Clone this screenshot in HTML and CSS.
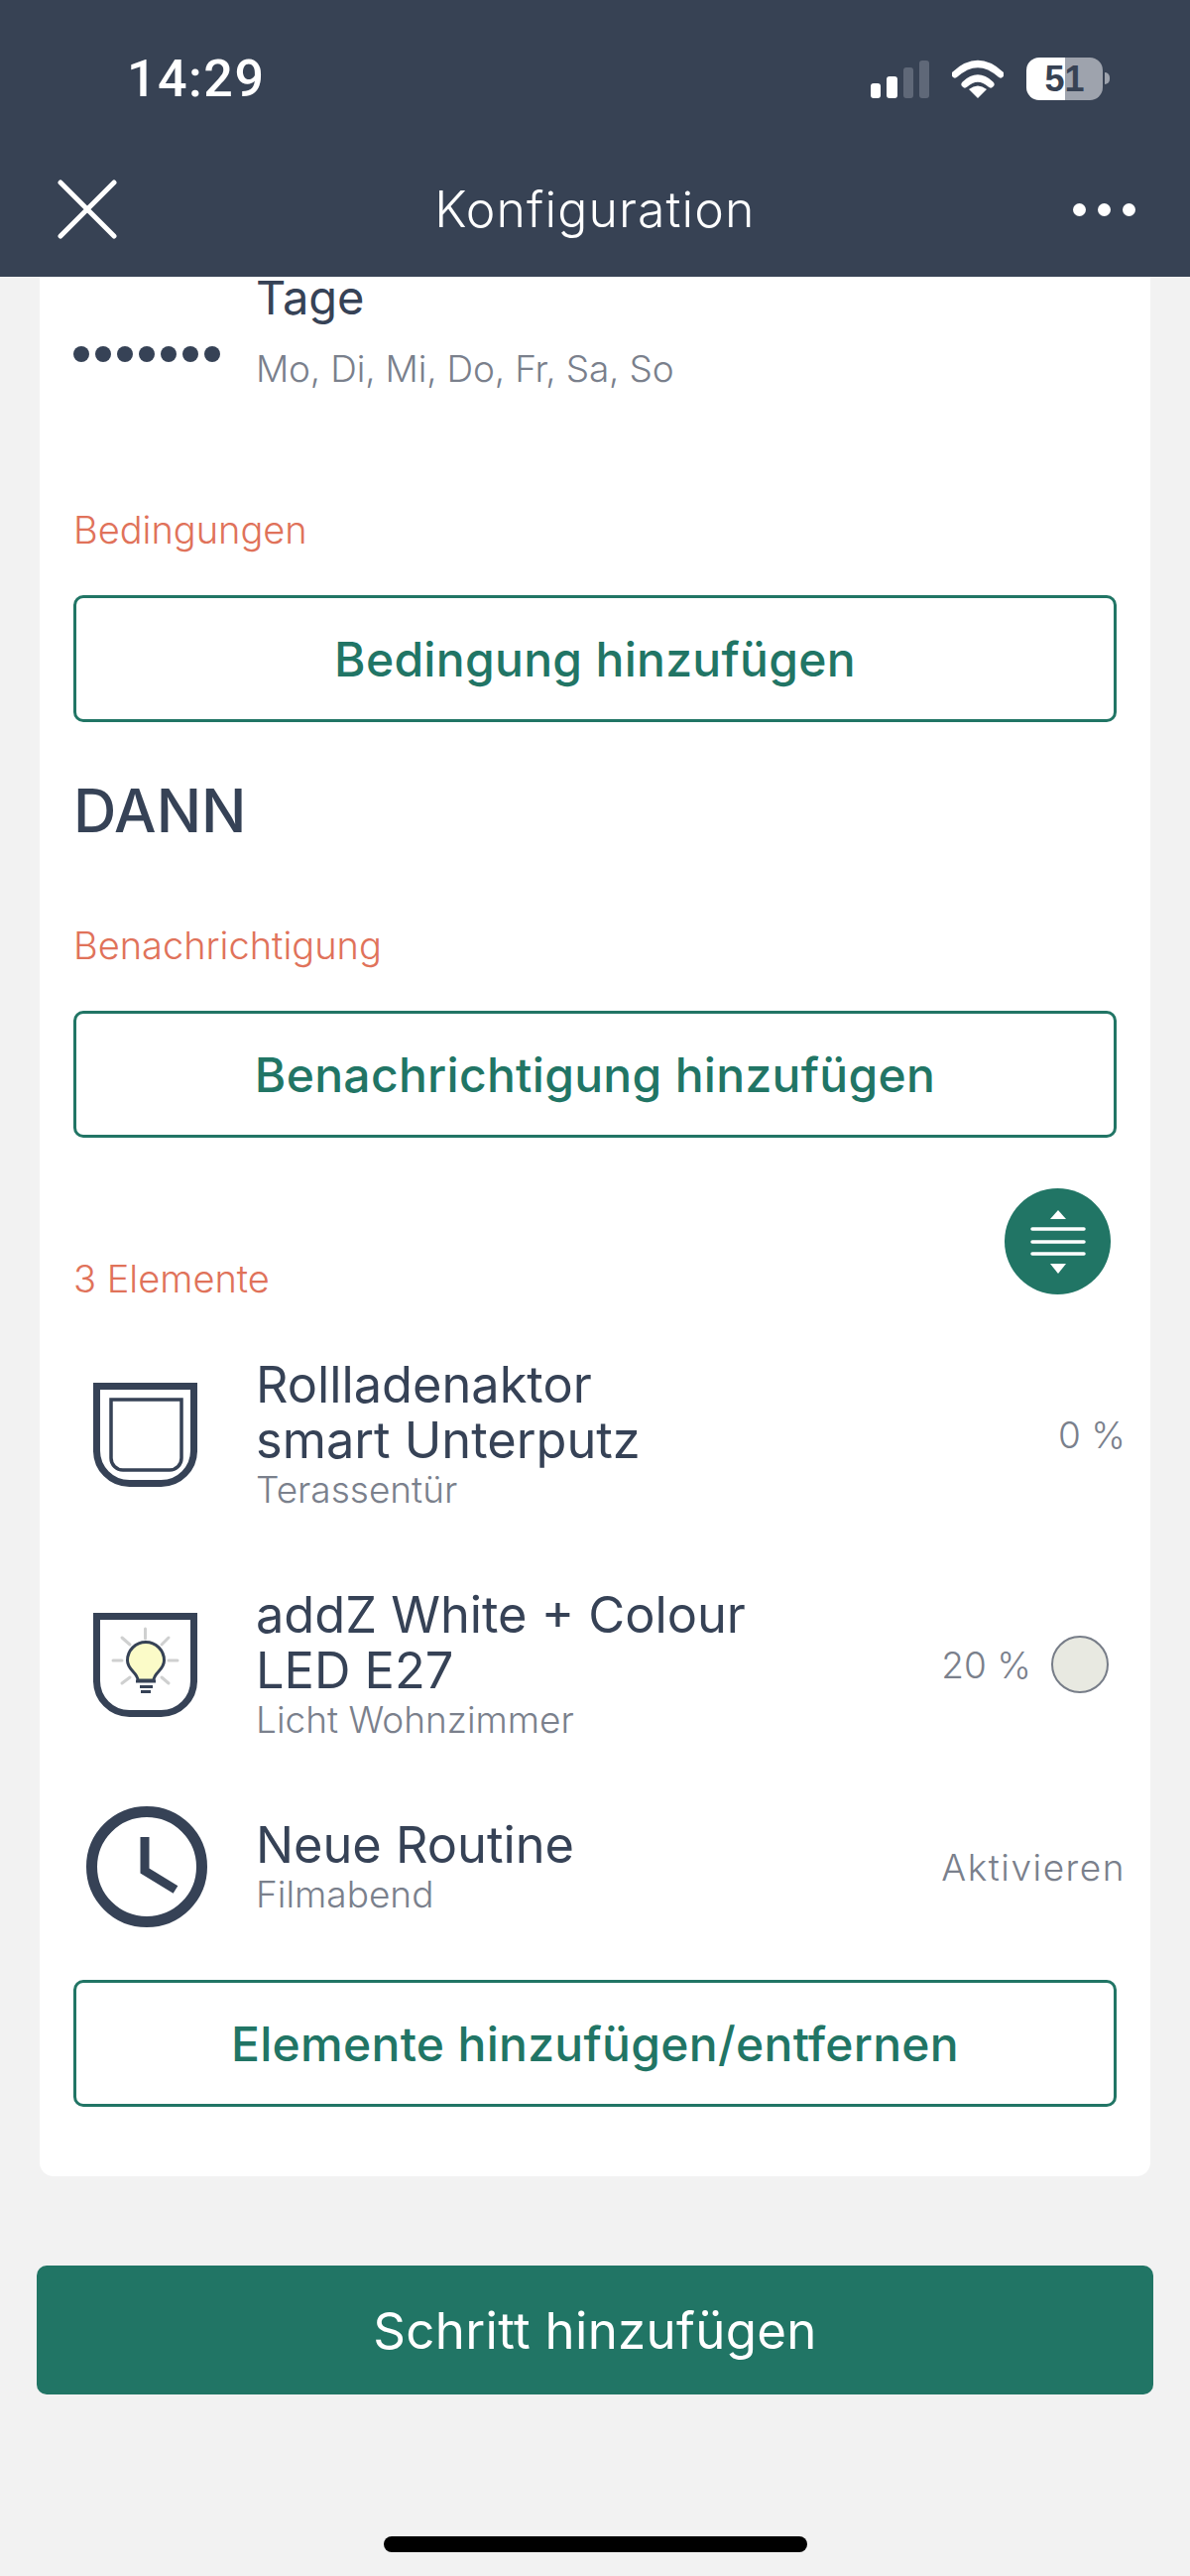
FILE: index.html
```html
<!doctype html>
<html lang="de">
  <head>
    <title>Konfiguration</title>
    <meta name="viewport" content="width=device-width, initial-scale=1.0" />
    <link rel="stylesheet" href="styles.css">
  </head>
  <body>
    <header class="topbar">
      <div class="status">
        <span class="time">14:29</span>
        <div class="status-icons">
          <svg class="signal" viewBox="0 0 59 38">
            <rect x="0" y="23" width="10" height="15" rx="3" fill="#fff" />
            <rect x="16" y="16" width="11" height="22" rx="3" fill="#fff" />
            <rect x="33" y="7" width="10" height="31" rx="3" fill="#5f6878" />
            <rect x="49" y="0" width="10" height="38" rx="3" fill="#5f6878" />
          </svg>
          <svg class="wifi" viewBox="0 0 52 39">
            <path d="M3 15Q26 -6 49 15" fill="none" stroke="#fff" stroke-width="7" stroke-linecap="round" />
            <path d="M13 25Q26 13 39 25" fill="none" stroke="#fff" stroke-width="7" stroke-linecap="round" />
            <path d="M26 39L17 30Q26 23 35 30Z" fill="#fff" />
          </svg>
          <div class="battery"><span>51</span></div>
          <span class="battery-nub"></span>
        </div>
      </div>
      <nav class="navbar">
        <svg class="close" viewBox="0 0 60 60">
          <path d="M3 3L57 57M57 3L3 57" fill="none" stroke="#fff" stroke-width="5" stroke-linecap="round" />
        </svg>
        <h1>Konfiguration</h1>
        <div class="more"><i></i><i></i><i></i></div>
      </nav>
    </header>

    <main class="content">
      <section class="card">
        <div class="days">
          <div class="day-dots"><i></i><i></i><i></i><i></i><i></i><i></i><i></i></div>
          <div>
            <div class="title days-title">Tage</div>
            <div class="sub days-sub">Mo, Di, Mi, Do, Fr, Sa, So</div>
          </div>
        </div>

        <div class="label label-first">Bedingungen</div>
        <button class="outline">Bedingung hinzufügen</button>

        <h2>DANN</h2>

        <div class="label label-notify">Benachrichtigung</div>
        <button class="outline">Benachrichtigung hinzufügen</button>

        <div class="elements-head">
          <div class="label">3 Elemente</div>
          <svg class="sort" viewBox="0 0 107 107">
            <circle cx="53.5" cy="53.5" r="53.5" fill="#217565" />
            <path d="M28 41H80M28 54H80M28 66H80" stroke="#fff" stroke-width="3.5" stroke-linecap="round" />
            <path d="M54 22L62 31H46Z" fill="#fff" />
            <path d="M46 76H62L54 86Z" fill="#fff" />
          </svg>
        </div>

        <div class="rows">
          <div class="row">
            <div class="row-icon">
              <svg class="device" viewBox="0 0 105 105">
                <path d="M3.500 3.500H101.500V68A33 33 0 0 1 68.500 101.500H36.500A33 33 0 0 1 3.500 68Z" fill="none" stroke="#364256" stroke-width="7" />
                <path d="M18 17H89V76A12 12 0 0 1 77 88H30A12 12 0 0 1 18 76Z" fill="none" stroke="#364256" stroke-width="3.500" />
              </svg>
            </div>
            <div class="row-text">
              <div class="title">Rollladenaktor<br>smart Unterputz</div>
              <div class="sub">Terassentür</div>
            </div>
            <div class="value">0 %</div>
          </div>

          <div class="row">
            <div class="row-icon">
              <svg class="device" viewBox="0 0 105 105">
                <path d="M3.500 3.500H101.500V68A33 33 0 0 1 68.500 101.500H36.500A33 33 0 0 1 3.500 68Z" fill="none" stroke="#364256" stroke-width="7" />
                <path d="M52.500 16V26M20 48H29M76 48H85M29 25L37 32M76 25L69 32M29 71L37 65M76 71L69 65" stroke="#cfd0d0" stroke-width="3" stroke-linecap="round" />
                <path d="M45 68C45 60 34.500 58 34.500 48A18.500 18.500 0 0 1 71.500 48C71.500 58 61 60 61 68Z" fill="#fbfbc8" stroke="#364256" stroke-width="3" />
                <path d="M43 69H63M47 74.500H60M48 79.500H58" stroke="#364256" stroke-width="3" />
              </svg>
            </div>
            <div class="row-text">
              <div class="title">addZ White + Colour<br>LED E27</div>
              <div class="sub">Licht Wohnzimmer</div>
            </div>
            <div class="value">20 %<span class="swatch"></span></div>
          </div>

          <div class="row">
            <div class="row-icon">
              <svg class="clock" viewBox="0 0 122 122">
                <circle cx="61" cy="61" r="55.500" fill="none" stroke="#364256" stroke-width="11" />
                <path d="M59 31V65L90 84" fill="none" stroke="#364256" stroke-width="9" />
              </svg>
            </div>
            <div class="row-text">
              <div class="title">Neue Routine</div>
              <div class="sub">Filmabend</div>
            </div>
            <div class="value value-action">Aktivieren</div>
          </div>
        </div>

        <button class="outline outline-last">Elemente hinzufügen/entfernen</button>
      </section>

      <button class="primary">Schritt hinzufügen</button>
    </main>

    <div class="home-bar"></div>
  </body>
</html>
```

FILE: styles.css
```css
* {
  box-sizing: border-box;
}
html,
body {
  margin: 0;
  height: 2597px;
}
body {
  display: flex;
  flex-direction: column;
  overflow: hidden;
  background: #f2f2f2;
  color: #364256;
  font-family: Inter, "Liberation Sans", sans-serif;
}
svg {
  display: block;
}

/* top bar */
.topbar {
  position: relative;
  z-index: 1;
  flex: none;
  height: 279px;
  background: #374254;
  color: white;
}
.status {
  display: flex;
  justify-content: space-between;
  height: 158px;
  padding: 52px 81px 0 128px;
}
.time {
  font-family: Roboto, sans-serif;
  font-size: 52px;
  font-weight: 500;
  letter-spacing: 1.5px;
  line-height: 56px;
}
.status-icons {
  display: flex;
  align-items: flex-start;
  padding-top: 6px;
}
.signal {
  width: 59px;
  height: 38px;
  margin-top: 3px;
  margin-right: 23px;
}
.wifi {
  width: 52px;
  height: 39px;
  margin-top: 2px;
  margin-right: 23px;
}
.battery {
  width: 77px;
  height: 43px;
  border-radius: 13px;
  background: linear-gradient(90deg, #fff 0 39px, #9ea3ad 39px);
  color: #374254;
  font-family: "Liberation Sans", sans-serif;
  font-size: 36px;
  font-weight: 700;
  line-height: 43px;
  text-align: center;
}
.battery-nub {
  width: 5px;
  height: 12px;
  margin: 15px 0 0 2px;
  border-radius: 0 6px 6px 0;
  background: #9ea3ad;
}
.navbar {
  display: flex;
  align-items: center;
  justify-content: space-between;
  height: 100px;
  padding: 6px 55px 0 58px;
}
.close {
  width: 60px;
  height: 60px;
}
h1 {
  margin: 0;
  font-size: 50px;
  font-weight: 300;
  letter-spacing: 1.1px;
  line-height: 60px;
}
.more {
  display: flex;
  gap: 12px;
}
.more i {
  width: 13px;
  height: 13px;
  border-radius: 50%;
  background: white;
}

/* card */
.content {
  flex: 1;
  min-height: 0;
  padding: 0 37px;
}
.card {
  margin: 0 3px;
  padding: 0 34px 70px;
  border-radius: 0 0 14px 14px;
  background: white;
}
.days {
  display: flex;
  margin-top: -7px;
}
.day-dots {
  flex: none;
  display: flex;
  gap: 6px;
  width: 184px;
  padding-top: 77px;
}
.day-dots i {
  width: 16px;
  height: 16px;
  border-radius: 50%;
  background: #364256;
}
.title {
  font-size: 50.5px;
  font-weight: 400;
  line-height: 56px;
}
.days-title {
  font-size: 47px;
}
.sub {
  color: #7a808c;
  font-size: 37px;
  font-weight: 300;
  line-height: 44px;
}
.days-sub {
  margin-top: 22px;
  letter-spacing: -0.2px;
}
.label {
  color: #e0725a;
  font-size: 38px;
  font-weight: 300;
  line-height: 44px;
}
.label-first {
  margin-top: 118px;
}
.label-notify {
  margin-top: 79px;
}
button {
  display: block;
  width: 100%;
  height: 128px;
  border-radius: 10px;
  font-family: inherit;
  font-size: 48px;
  font-weight: 500;
  letter-spacing: 0.3px;
}
.outline {
  margin-top: 44px;
  border: 3px solid #217565;
  background: white;
  color: #217565;
}
.outline-last {
  margin-top: 64px;
}
h2 {
  margin: 54px 0 0;
  font-size: 60px;
  font-weight: 500;
  line-height: 70px;
}

/* elements */
.elements-head {
  display: flex;
  align-items: flex-end;
  justify-content: space-between;
  height: 113px;
  margin-top: 51px;
  padding-right: 6px;
}
.sort {
  align-self: flex-start;
  width: 107px;
  height: 107px;
}
.rows {
  display: flex;
  flex-direction: column;
  gap: 76px;
  margin: 57px -9px 0 0;
}
.row {
  display: flex;
  align-items: center;
}
.row-icon {
  flex: none;
  display: flex;
  justify-content: center;
  width: 148px;
  margin-right: 36px;
}
.device {
  width: 105px;
  height: 105px;
  margin-right: 3px;
}
.clock {
  width: 122px;
  height: 122px;
  margin: -11px 0;
}
.row-text {
  flex: 1;
}
.value {
  display: flex;
  align-items: center;
  gap: 20px;
  color: #7a808c;
  font-size: 37px;
  font-weight: 300;
}
.value-action {
  letter-spacing: 1.5px;
}
.swatch {
  width: 58px;
  height: 58px;
  margin-right: 17px;
  border: 2px solid #777d88;
  border-radius: 50%;
  background: #e8e9e1;
}
.primary {
  width: 1126px;
  height: 130px;
  margin-top: 90px;
  border: none;
  background: #217565;
  color: white;
  font-size: 51px;
  font-weight: 400;
}
.home-bar {
  position: absolute;
  left: 387px;
  top: 2557px;
  width: 427px;
  height: 16px;
  border-radius: 8px;
  background: black;
}
```
